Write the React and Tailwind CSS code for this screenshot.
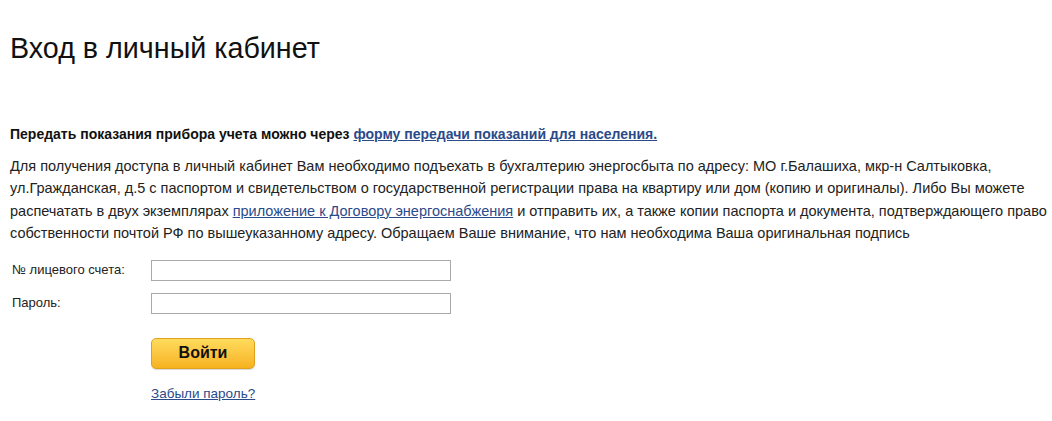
export default function App() {
  return (
    <div className="bg-white min-h-screen pl-[10px] pr-[4px] text-[#111] font-['Liberation_Sans',Arial,sans-serif]">
      <h1 className="pt-[32px] text-[28.7px] leading-[32px] font-normal text-[#111]">Вход в личный кабинет</h1>

      <p className="mt-[62px] text-[14px] leading-[16px] font-bold">
        Передать показания прибора учета можно через{' '}
        <a href="#" className="text-[#2b4a8a] underline">форму передачи показаний для населения.</a>
      </p>

      <p className="mt-[13px] text-[14.5px] leading-[22.4px] text-[#222]">
        Для получения доступа в личный кабинет Вам необходимо подъехать в бухгалтерию энергосбыта по адресу: МО г.Балашиха, мкр-н Салтыковка,
        ул.Гражданская, д.5 с паспортом и свидетельством о государственной регистрации права на квартиру или дом (копию и оригиналы). Либо Вы можете
        распечатать в двух экземплярах{' '}
        <a href="#" className="text-[#2b4a8a] underline">приложение к Договору энергоснабжения</a>{' '}
        и отправить их, а также копии паспорта и документа, подтверждающего право собственности почтой РФ по вышеуказанному адресу. Обращаем Ваше внимание, что нам необходима Ваша оригинальная подпись
      </p>

      <div className="mt-[15px] flex flex-col gap-[12px] text-[13px] text-[#222]">
        <div className="flex items-center">
          <label className="w-[141px] pl-[2px]">№ лицевого счета:</label>
          <input className="w-[300px] h-[21px] border border-[#a9a9a9] bg-white outline-none" />
        </div>
        <div className="flex items-center">
          <label className="w-[141px] pl-[2px]">Пароль:</label>
          <input type="password" className="w-[300px] h-[21px] border border-[#a9a9a9] bg-white outline-none" />
        </div>
      </div>

      <div className="ml-[141px] mt-[24px]">
        <button className="w-[104px] h-[31px] rounded-[5px] border border-[#e0a21c] bg-gradient-to-b from-[#ffdb5c] to-[#f7b21c] text-[16px] font-bold text-[#111] shadow-[0_1px_1px_rgba(0,0,0,0.15)]">
          Войти
        </button>
        <div className="mt-[12px]">
          <a href="#" className="text-[13.5px] text-[#2b4a8a] underline">Забыли пароль?</a>
        </div>
      </div>
    </div>
  )
}
